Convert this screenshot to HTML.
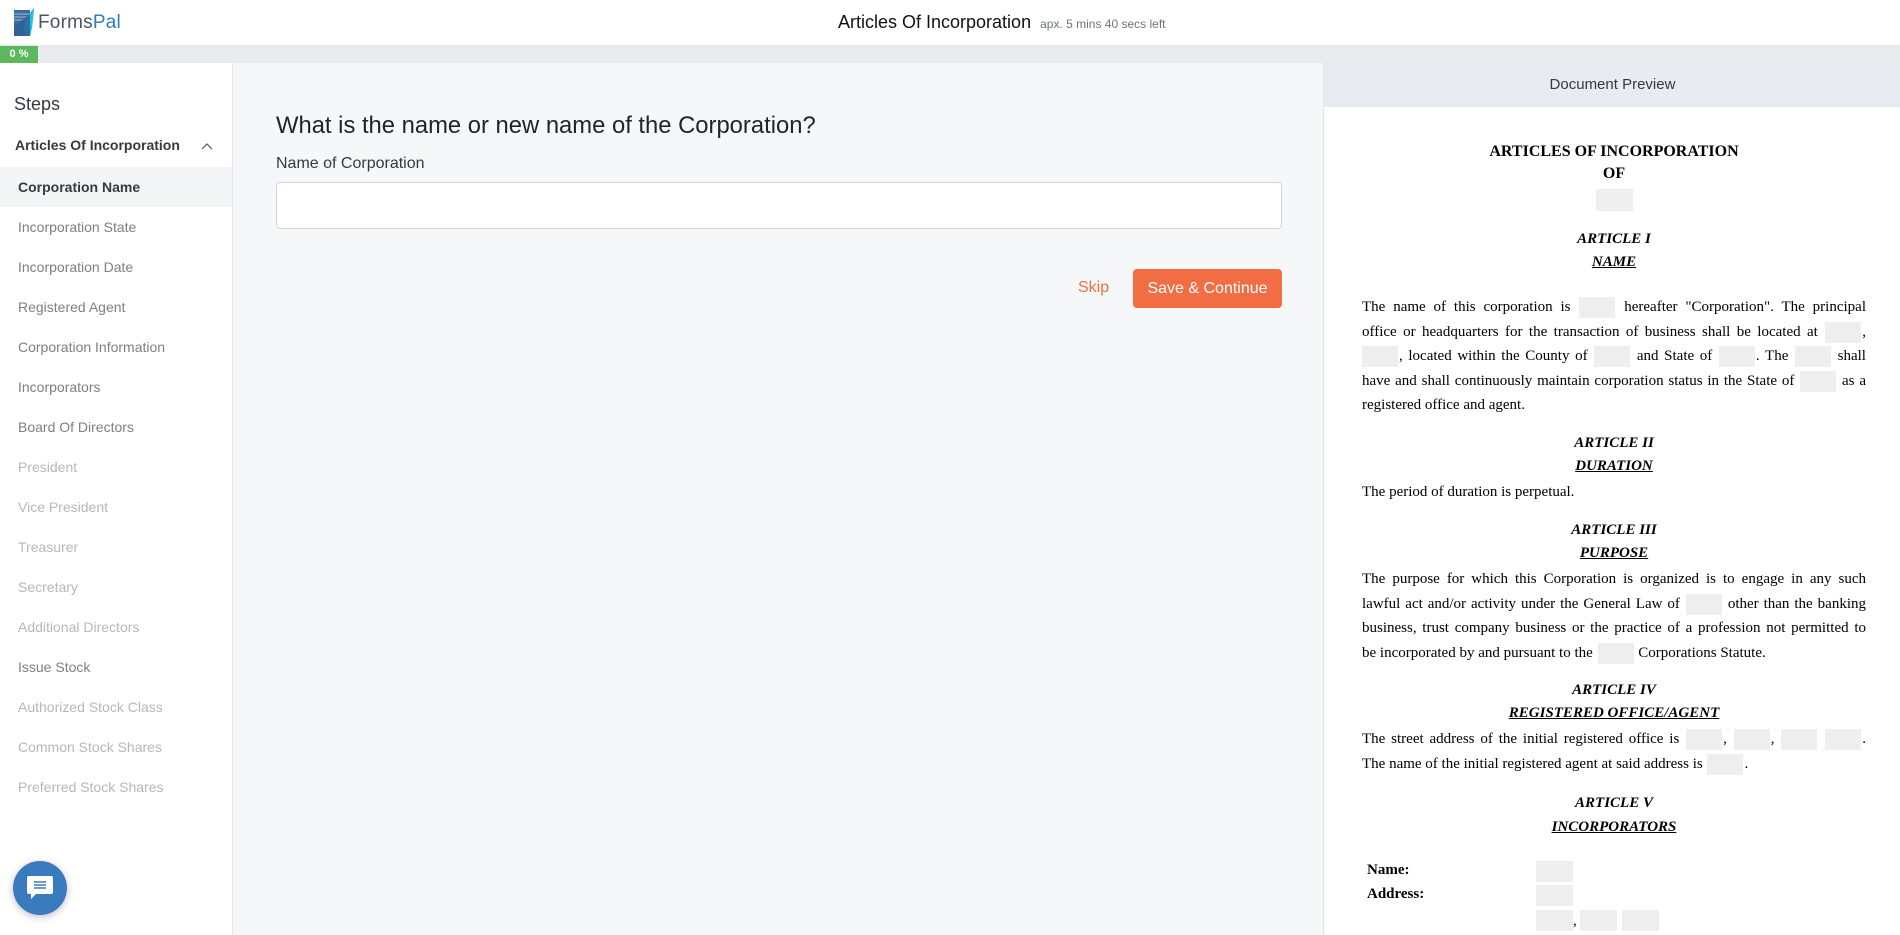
<!DOCTYPE html>
<html><head><meta charset="utf-8"><style>
*{box-sizing:border-box;margin:0;padding:0}
body{width:1900px;height:935px;overflow:hidden;font-family:"Liberation Sans",sans-serif;background:#fff;position:relative;color:#212529}
.abs{position:absolute}
#hdr{left:0;top:0;width:1900px;height:46px;background:#fff;border-bottom:1px solid #e3e6ea}
#prog{left:0;top:46px;width:1900px;height:17px;background:#e9ecef}
#prog div{width:38px;height:17px;background:#5cb85c;color:#fff;font-size:11px;font-weight:bold;line-height:17px;text-align:center}
#side{left:0;top:63px;width:233px;height:872px;background:#fff;border-right:1px solid #e3e6ea}
.it{position:absolute;left:0;width:232px;height:40px;line-height:40px;padding-left:18px;font-size:14px;color:#7a818a}
.lt{color:#b3b8bf}
#main{left:233px;top:63px;width:1090px;height:872px;background:#f6f7f9}
#prev{left:1323px;top:63px;width:577px;height:872px;background:#fff;border-left:1px solid #e3e6ea}
#ph{left:0;top:0;width:577px;height:44px;background:#e8ebf1;text-align:center;line-height:44px;font-size:15px;color:#343a40}
.doc{font-family:"Liberation Serif",serif;font-size:15px;color:#000}
.c{position:absolute;left:38px;width:504px;text-align:center}
.b{font-weight:bold}.i{font-style:italic;font-weight:bold}.u{text-decoration:underline}
.p{position:absolute;left:38px;width:504px;line-height:24.6px}
.p div{text-align:justify;text-align-last:justify;white-space:nowrap}
.p div.l{text-align-last:left}
.bx{display:inline-block;width:36px;height:21px;background:#eee;vertical-align:middle;margin:0 1px}
</style></head><body>
<div id="hdr" class="abs">
 <svg class="abs" style="left:13px;top:8px" width="22" height="29" viewBox="0 0 22 29">
  <rect x="1" y="2" width="16" height="26" fill="#3b6ea5"/>
  <path d="M1 6h16M1 9h16M1 12h16" stroke="#9aa6b3" stroke-width="1.3"/>
  <path d="M17 28 C7 24 10 12 21 0 C20 14 19 22 17 28Z" fill="#1fc0e0"/>
  <path d="M1 28 V18 C6 14 12 10 17 6 L17 28Z" fill="#2e5d92" opacity=".8"/>
 </svg>
 <div class="abs" style="left:38px;top:12px;font-size:19px;color:#4b5561;letter-spacing:.2px">Forms<span style="color:#2a7fc0">Pal</span></div>
 <div class="abs" style="left:838px;top:12px;font-size:18px;color:#111">Articles Of Incorporation <span style="font-size:12px;color:#6c757d;margin-left:4px">apx. 5 mins 40 secs left</span></div>
</div>
<div id="prog" class="abs"><div>0 %</div></div>
<div id="side" class="abs">
 <div class="abs" style="left:14px;top:31px;font-size:18px;color:#343a40">Steps</div>
 <div class="abs" style="left:15px;top:74px;font-size:14px;font-weight:bold;color:#343a40">Articles Of Incorporation</div>
 <svg class="abs" style="left:201px;top:79px" width="12" height="8"><path d="M1 7 L6 2 L11 7" stroke="#555" fill="none" stroke-width="1.2"/></svg>
 <div class="it" style="top:104px;background:#f4f5f7;color:#343a40;font-weight:bold">Corporation Name</div>
 <div class="it" style="top:144px">Incorporation State</div>
 <div class="it" style="top:184px">Incorporation Date</div>
 <div class="it" style="top:224px">Registered Agent</div>
 <div class="it" style="top:264px">Corporation Information</div>
 <div class="it" style="top:304px">Incorporators</div>
 <div class="it" style="top:344px">Board Of Directors</div>
 <div class="it lt" style="top:384px">President</div>
 <div class="it lt" style="top:424px">Vice President</div>
 <div class="it lt" style="top:464px">Treasurer</div>
 <div class="it lt" style="top:504px">Secretary</div>
 <div class="it lt" style="top:544px">Additional Directors</div>
 <div class="it" style="top:584px">Issue Stock</div>
 <div class="it lt" style="top:624px">Authorized Stock Class</div>
 <div class="it lt" style="top:664px">Common Stock Shares</div>
 <div class="it lt" style="top:704px">Preferred Stock Shares</div>
 <div class="abs" style="left:13px;top:798px;width:54px;height:54px;border-radius:50%;background:#3a7bbf;box-shadow:0 2px 8px rgba(0,0,0,.25)">
  <svg class="abs" style="left:13px;top:14px" width="28" height="26" viewBox="0 0 28 26"><path d="M3 1h22a2 2 0 0 1 2 2v14a2 2 0 0 1-2 2H10l-5 5v-5H3a2 2 0 0 1-2-2V3a2 2 0 0 1 2-2z" fill="#fff"/><path d="M8 7h12M8 10h12M8 13h12" stroke="#3a7bbf" stroke-width="1.6"/></svg>
 </div>
</div>
<div id="main" class="abs">
 <div class="abs" style="left:43px;top:49px;font-size:23.8px;color:#212529">What is the name or new name of the Corporation?</div>
 <div class="abs" style="left:43px;top:92px;font-size:16px;color:#343a40">Name of Corporation</div>
 <div class="abs" style="left:43px;top:119px;width:1006px;height:47px;background:#fff;border:1px solid #ced4da;border-radius:4px"></div>
 <div class="abs" style="left:845px;top:216px;font-size:16px;color:#f26d43">Skip</div>
 <div class="abs" style="left:900px;top:206px;width:149px;height:39px;background:#f26d43;border-radius:4px;color:#fff;font-size:16px;line-height:39px;text-align:center">Save &amp; Continue</div>
</div>
<div id="prev" class="abs doc">
 <div id="ph" class="abs" style="font-family:'Liberation Sans',sans-serif">Document Preview</div>
 <div class="c b" style="top:80px;font-size:16px">ARTICLES OF INCORPORATION</div>
 <div class="c b" style="top:102px;font-size:16px">OF</div>
 <div class="abs" style="left:272px;top:126px;width:37px;height:22px;background:#eee"></div>
 <div class="c i" style="top:168px">ARTICLE I</div>
 <div class="c i u" style="top:191px">NAME</div>
 <div class="p" style="top:232px">
  <div>The name of this corporation is <span class="bx"></span> hereafter "Corporation". The principal</div>
  <div>office or headquarters for the transaction of business shall be located at <span class="bx"></span>,</div>
  <div><span class="bx" style="margin-left:0"></span>, located within the County of <span class="bx"></span> and State of <span class="bx"></span>. The <span class="bx"></span> shall</div>
  <div>have and shall continuously maintain corporation status in the State of <span class="bx"></span> as a</div>
  <div class="l">registered office and agent.</div>
 </div>
 <div class="c i" style="top:372px">ARTICLE II</div>
 <div class="c i u" style="top:395px">DURATION</div>
 <div class="p" style="top:417px"><div class="l">The period of duration is perpetual.</div></div>
 <div class="c i" style="top:459px">ARTICLE III</div>
 <div class="c i u" style="top:482px">PURPOSE</div>
 <div class="p" style="top:504px">
  <div>The purpose for which this Corporation is organized is to engage in any such</div>
  <div>lawful act and/or activity under the General Law of <span class="bx"></span> other than the banking</div>
  <div>business, trust company business or the practice of a profession not permitted to</div>
  <div class="l">be incorporated by and pursuant to the <span class="bx"></span> Corporations Statute.</div>
 </div>
 <div class="c i" style="top:619px">ARTICLE IV</div>
 <div class="c i u" style="top:642px">REGISTERED OFFICE/AGENT</div>
 <div class="p" style="top:664px">
  <div>The street address of the initial registered office is <span class="bx"></span>, <span class="bx"></span>, <span class="bx"></span> <span class="bx"></span>.</div>
  <div class="l">The name of the initial registered agent at said address is <span class="bx"></span>.</div>
 </div>
 <div class="c i" style="top:732px">ARTICLE V</div>
 <div class="c i u" style="top:756px">INCORPORATORS</div>
 <div class="abs b" style="left:43px;top:799px">Name:</div>
 <div class="abs b" style="left:43px;top:823px">Address:</div>
 <div class="abs" style="left:212px;top:798px;width:37px;height:21px;background:#eee"></div>
 <div class="abs" style="left:212px;top:822px;width:37px;height:21px;background:#eee"></div>
 <div class="abs" style="left:212px;top:847px;width:37px;height:21px;background:#eee"></div>
 <div class="abs" style="left:249px;top:850px">,</div>
 <div class="abs" style="left:256px;top:847px;width:37px;height:21px;background:#eee"></div>
 <div class="abs" style="left:298px;top:847px;width:37px;height:21px;background:#eee"></div>
</div>
</body></html>
